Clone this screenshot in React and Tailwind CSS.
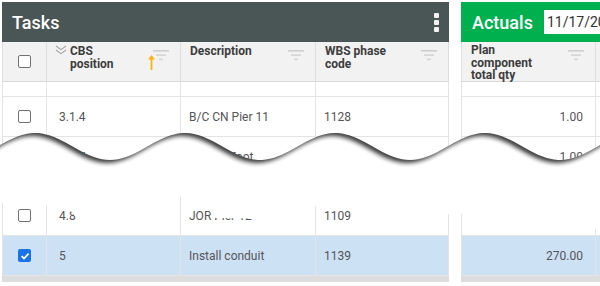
import React from 'react';

// torn-paper edges: upper edge is a regular wave, lower edge is a rougher one
const topEdge = (x) => 146.5 - 13.5 * Math.cos((2 * Math.PI * (x - 35)) / 150);
const lowKnots = [
  [-10, 203], [47, 205], [66, 208], [78, 217], [120, 214], [170, 200], [183, 196], [205, 207],
  [216, 218], [282, 219], [318, 206], [380, 207], [450, 214], [500, 212], [560, 221], [610, 231],
];
const lowEdge = (x) => {
  for (let i = 0; i < lowKnots.length - 1; i++) {
    const [x0, y0] = lowKnots[i];
    const [x1, y1] = lowKnots[i + 1];
    if (x >= x0 && x <= x1) {
      const t = (1 - Math.cos(((x - x0) / (x1 - x0)) * Math.PI)) / 2;
      return y0 + (y1 - y0) * t;
    }
  }
  return lowKnots[lowKnots.length - 1][1];
};
const sample = (fn, step) => {
  const out = [];
  for (let x = -10; x <= 610; x += step) out.push([x, fn(x)]);
  return out;
};
const toStr = (p) => p.map(([x, y]) => `${x},${y.toFixed(2)}`).join(' L ');
const topPts = sample(topEdge, 4);
const lowPts = sample(lowEdge, 2).reverse();
const paperPath = `M ${toStr(topPts)} L ${toStr(lowPts)} Z`;
const shadePath = `M -10,-20 L ${toStr(topPts)} L 610,-20 Z`;

const TornEdge = () => (
  <svg className="absolute left-0 top-0 pointer-events-none" width="600" height="286" viewBox="0 0 600 286">
    <defs>
      <clipPath id="paper">
        <path d={paperPath} />
      </clipPath>
      <filter id="soft" x="-5%" y="-20%" width="110%" height="140%">
        <feGaussianBlur stdDeviation="2.2" />
      </filter>
    </defs>
    <path d={paperPath} fill="#ffffff" />
    <g clipPath="url(#paper)">
      <path d={shadePath} fill="#1e1e1e" opacity="0.85" transform="translate(-3 3)" filter="url(#soft)" />
    </g>
  </svg>
);

const FilterIcon = () => (
  <svg width="16" height="11" viewBox="0 0 16 11" className="absolute top-[8px] right-[11px]">
    <rect x="0" y="0" width="16" height="1.6" fill="#cdcdcd" />
    <rect x="3" y="4.3" width="10" height="1.6" fill="#d4d4d4" />
    <rect x="6" y="8.6" width="4" height="1.6" fill="#d4d4d4" />
  </svg>
);

const Checkbox = ({ checked }) =>
  checked ? (
    <div className="w-[13px] h-[13px] rounded-[2px] bg-[#1a73e8] flex items-center justify-center">
      <svg width="10" height="10" viewBox="0 0 10 10">
        <polyline points="1.6,5.2 4,7.5 8.6,2.6" fill="none" stroke="#fff" strokeWidth="1.8" />
      </svg>
    </div>
  ) : (
    <div className="w-[13px] h-[13px] rounded-[2px] border-[1.5px] border-[#727272] bg-white" />
  );

const taskCols = 'grid grid-cols-[45px_134px_135px_133px]';
const actCols = 'grid grid-cols-[135px_100px]';
const cell = 'border-r border-[#e4e4e4] flex items-center';

const taskRows = [
  { h: 'h-[15px]' },
  { cbs: '3.1.4', desc: 'B/C CN Pier 11', wbs: '1128', qty: '1.00' },
  { cbs: '3.1.5', desc: 'Pier 11 Foot', wbs: '1129', qty: '1.00' },
  { h: 'h-[19px]' },
  { cbs: '4.8', desc: 'JOR Pier 12', wbs: '1109', qty: '' },
  { cbs: '5', desc: 'Install conduit', wbs: '1139', qty: '270.00', selected: true },
];

const TaskRow = ({ row }) => {
  const bg = row.selected ? 'bg-[#cde1f5]' : 'bg-white';
  const h = row.h || 'h-[40px]';
  return (
    <div className={`${taskCols} ${h} ${bg} border-b border-[#e4e4e4] text-[12px] text-[#555458]`}>
      <div className={`${cell} border-l justify-center`}>{row.cbs && <Checkbox checked={row.selected} />}</div>
      <div className={`${cell} pl-[12px]`}>{row.cbs}</div>
      <div className={`${cell} pl-[8px]`}>{row.desc}</div>
      <div className={`${cell} pl-[8px]`}>{row.wbs}</div>
    </div>
  );
};

const ActRow = ({ row }) => {
  const bg = row.selected ? 'bg-[#cde1f5]' : 'bg-white';
  const h = row.h || 'h-[40px]';
  return (
    <div className={`${actCols} ${h} ${bg} border-b border-[#e4e4e4] text-[12px] text-[#555458]`}>
      <div className={`${cell} border-l justify-end pr-[12px]`}>{row.qty}</div>
      <div className={cell} />
    </div>
  );
};

const Tasks = () => (
  <div className="w-[447px] flex flex-col">
    <div className="h-[40px] bg-[#4a5556] flex items-center justify-between pl-[10px] pr-[10px]">
      <span className="text-[18px] font-medium text-white">Tasks</span>
      <div className="flex flex-col gap-[2px]">
        <span className="w-[5px] h-[5px] rounded-[1px] bg-[#f2f2f2]" />
        <span className="w-[5px] h-[5px] rounded-[1px] bg-[#f2f2f2]" />
        <span className="w-[5px] h-[5px] rounded-[1px] bg-[#f2f2f2]" />
      </div>
    </div>
    <div className={`${taskCols} h-[40px] bg-[#f2f2f2] border-b border-[#d9d9d9] text-[12px] leading-[12.5px] font-bold text-[#3d3d3d]`}>
      <div className="border-r border-l border-[#dedede] flex items-center justify-center">
        <Checkbox />
      </div>
      <div className="relative border-r border-[#dedede] pl-[23px] pt-[3px]">
        <svg width="12" height="10" viewBox="0 0 12 10" className="absolute left-[8px] top-[3px]">
          <polyline points="1,1 6,4.6 11,1" fill="none" stroke="#a3a3a3" strokeWidth="1.1" />
          <polyline points="1,5 6,8.6 11,5" fill="none" stroke="#a3a3a3" strokeWidth="1.1" />
        </svg>
        CBS
        <br />
        position
        <svg width="7" height="15" viewBox="0 0 7 15" className="absolute left-[101px] top-[13px]">
          <polygon points="3.5,0 7,4.5 0,4.5" fill="#f7b50c" />
          <rect x="2.6" y="3.5" width="1.8" height="11.5" fill="#f7b50c" />
        </svg>
        <FilterIcon />
      </div>
      <div className="relative border-r border-[#dedede] pl-[9px] pt-[3px]">
        Description
        <FilterIcon />
      </div>
      <div className="relative border-r border-[#dedede] pl-[9px] pt-[3px]">
        WBS phase
        <br />
        code
        <FilterIcon />
      </div>
    </div>
    {taskRows.map((r, i) => (
      <TaskRow key={i} row={r} />
    ))}
    <div className="h-[6px] bg-[#dddddd]" />
  </div>
);

const Actuals = () => (
  <div className="w-[235px] flex flex-col shrink-0">
    <div className="h-[40px] bg-[#00b04f] flex items-center pl-[11px]">
      <span className="text-[18px] font-medium text-white">Actuals</span>
      <div className="ml-[11px] h-[24px] w-[120px] bg-white flex items-center pl-[3px] text-[14px] text-[#333]">
        11/17/2019
      </div>
    </div>
    <div className={`${actCols} h-[40px] bg-[#f2f2f2] border-b border-[#d9d9d9] text-[12px] leading-[12.5px] font-bold text-[#3d3d3d]`}>
      <div className="relative border-r border-l border-[#dedede] pl-[9px] pt-[2px]">
        Plan
        <br />
        component
        <br />
        total qty
        <FilterIcon />
      </div>
      <div className="border-r border-[#dedede]" />
    </div>
    {taskRows.map((r, i) => (
      <ActRow key={i} row={r} />
    ))}
    <div className="h-[6px] bg-[#dddddd]" />
  </div>
);

export default function App() {
  return (
    <div className="relative w-[600px] h-[286px] overflow-hidden bg-white font-['Roboto',sans-serif]">
      <div className="flex gap-[12px] pt-[2px] pl-[2px]">
        <Tasks />
        <Actuals />
      </div>
      <TornEdge />
    </div>
  );
}
